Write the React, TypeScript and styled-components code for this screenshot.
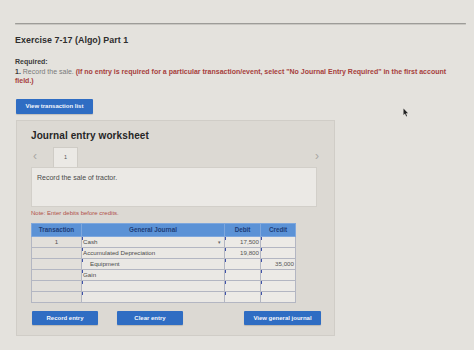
import React from 'react';
import styled, { createGlobalStyle } from 'styled-components';

const GlobalStyle = createGlobalStyle`
  html, body {
    margin: 0;
    padding: 0;
    background: #e4e2dd;
  }
  body {
    width: 474px;
    height: 350px;
    overflow: hidden;
    font-family: 'Liberation Sans', Arial, sans-serif;
    color: #2a2a2a;
  }
`;

interface Row {
  trans?: string;
  account: string;
  indent?: boolean;
  debit?: string;
  credit?: string;
  select?: boolean;
}

const rows: Row[] = [
  { trans: '1', account: 'Cash', debit: '17,500', select: true },
  { account: 'Accumulated Depreciation', debit: '19,800' },
  { account: 'Equipment', indent: true, credit: '35,000' },
  { account: 'Gain' },
  { account: '' },
  { account: '' },
];

export default function App() {
  return (
    <>
      <GlobalStyle />
      <Page>
        <TopRule />
        <Title>Exercise 7-17 (Algo) Part 1</Title>
        <Required>
          <strong>Required:</strong>
          <Instruction>
            <Lead>1. </Lead>
            <Muted>Record the sale. </Muted>
            <Warn>
              (If no entry is required for a particular transaction/event, select "No Journal Entry
              Required" in the first account
            </Warn>
            <br />
            <Warn>field.)</Warn>
          </Instruction>
        </Required>
        <BlueButton $width={77}>View transaction list</BlueButton>
        <Pointer viewBox="0 0 6 9">
          <path d="M0.5 0.5 L0.5 7 L2 5.6 L3.2 8.4 L4 8 L2.9 5.3 L5 5.2 Z" fill="#222" />
        </Pointer>
        <Panel>
          <PanelTitle>Journal entry worksheet</PanelTitle>
          <TabRow>
            <Arrow>‹</Arrow>
            <Tab>1</Tab>
            <Spacer />
            <Arrow $right>›</Arrow>
          </TabRow>
          <Task>Record the sale of tractor.</Task>
          <Note>Note: Enter debits before credits.</Note>
          <Table>
            <thead>
              <tr>
                <Th $w={49}>Transaction</Th>
                <Th $w={142}>General Journal</Th>
                <Th $w={35}>Debit</Th>
                <Th $w={34}>Credit</Th>
              </tr>
            </thead>
            <tbody>
              {rows.map((r, i) => (
                <tr key={i}>
                  <TransCell>{r.trans}</TransCell>
                  <AccountCell $indent={r.indent}>
                    <Tick />
                    {r.account}
                    {r.select && <Caret>▾</Caret>}
                  </AccountCell>
                  <AmountCell>
                    <Tick />
                    {r.debit}
                  </AmountCell>
                  <AmountCell>
                    <Tick />
                    {r.credit}
                  </AmountCell>
                </tr>
              ))}
            </tbody>
          </Table>
          <Actions>
            <BlueButton $width={66}>Record entry</BlueButton>
            <BlueButton $width={66}>Clear entry</BlueButton>
            <Spacer />
            <BlueButton $width={77}>View general journal</BlueButton>
          </Actions>
        </Panel>
      </Page>
    </>
  );
}

const Page = styled.div`
  position: relative;
  padding: 23px 8px 0 15px;
`;

const TopRule = styled.div`
  height: 1px;
  background: #9d9c98;
  border-radius: 1px;
  box-shadow: 0 1px 0 #c9c7c2;
`;

const Title = styled.h1`
  margin: 10px 0 0;
  font-size: 8.9px;
  font-weight: 700;
  line-height: 12px;
  color: #2e2e2e;
  letter-spacing: 0.05px;
`;

const Required = styled.div`
  margin-top: 11px;
  font-size: 7px;
  line-height: 9.5px;
  color: #3a3a3a;
  strong {
    display: block;
    font-size: 7px;
    font-weight: 700;
  }
`;

const Instruction = styled.p`
  margin: 0;
  white-space: nowrap;
`;

const Lead = styled.span`
  font-weight: 700;
  color: #3a3a3a;
`;

const Muted = styled.span`
  color: #7a7a7a;
`;

const Warn = styled.span`
  color: #a6403c;
  font-weight: 700;
`;

const BlueButton = styled.div<{ $width: number }>`
  display: flex;
  align-items: center;
  justify-content: center;
  width: ${(p) => p.$width}px;
  height: 15px;
  margin-top: 13px;
  margin-left: 1px;
  background: #2f6dc3;
  border-radius: 1px;
  color: #f4f6fb;
  font-size: 6px;
  font-weight: 700;
  box-shadow: 0 1px 1px rgba(0, 0, 0, 0.15);
`;

const Pointer = styled.svg`
  position: absolute;
  left: 403px;
  top: 108px;
  width: 6px;
  height: 9px;
`;

const Panel = styled.section`
  margin: 6px 0 0 1px;
  width: 319px;
  height: 216px;
  box-sizing: border-box;
  padding: 9px 18px 0 14px;
  background: #dcd9d3;
  border: 1px solid #d0cdc7;
  ${BlueButton} {
    margin: 0;
    height: 14px;
  }
`;

const PanelTitle = styled.h2`
  margin: 0;
  font-size: 10px;
  line-height: 12px;
  font-weight: 700;
  color: #262626;
  letter-spacing: 0.1px;
`;

const TabRow = styled.div`
  display: flex;
  align-items: flex-end;
  width: 290px;
  height: 20px;
  margin-top: 5px;
`;

const Arrow = styled.span<{ $right?: boolean }>`
  width: 22px;
  box-sizing: border-box;
  padding: 0 2px;
  font-size: 12px;
  line-height: 22px;
  color: #a9a7a3;
  text-align: ${(p) => (p.$right ? 'right' : 'left')};
`;

const Tab = styled.div`
  width: 25px;
  height: 20px;
  box-sizing: border-box;
  background: #ebe9e5;
  border: 1px solid #cfccc6;
  border-bottom: none;
  font-size: 5.5px;
  line-height: 18px;
  text-align: center;
  color: #555;
`;

const Spacer = styled.div`
  flex: 1;
`;

const Task = styled.div`
  width: 286px;
  height: 40px;
  box-sizing: border-box;
  padding: 6px 5px;
  background: #ebe9e5;
  border: 1px solid #d2cfc9;
  font-size: 7px;
  color: #4a4a4a;
`;

const Note = styled.div`
  margin-top: 2px;
  font-size: 6px;
  line-height: 8px;
  color: #b0504a;
`;

const Table = styled.table`
  margin-top: 6px;
  border-collapse: collapse;
  table-layout: fixed;
  width: 264px;
  font-size: 6.2px;
  td {
    height: 10px;
    padding: 0;
    border: 1px solid #b3b6c2;
  }
`;

const Th = styled.th<{ $w: number }>`
  width: ${(p) => p.$w}px;
  height: 12px;
  padding: 0;
  background: #5b92d6;
  border: 1px solid #7ea7dd;
  color: #1d3d78;
  font-weight: 700;
  font-size: 6.3px;
`;

const TransCell = styled.td`
  background: #e2dfda;
  text-align: center;
  color: #555;
`;

const Tick = styled.i`
  position: absolute;
  left: 0;
  top: 0;
  width: 1px;
  height: 3px;
  background: #3f52a8;
`;

const AccountCell = styled.td<{ $indent?: boolean }>`
  position: relative;
  background: #eae8e4;
  border-left: 1px solid #4a5ba8 !important;
  padding-left: ${(p) => (p.$indent ? 8 : 1)}px !important;
  color: #4a4a4a;
  white-space: nowrap;
`;

const Caret = styled.span`
  position: absolute;
  right: 3px;
  top: 0;
  font-size: 5px;
  line-height: 10px;
  color: #666;
`;

const AmountCell = styled.td`
  position: relative;
  background: #eceae6;
  border-left: 1px solid #4a5ba8 !important;
  text-align: right;
  padding-right: 1px !important;
  color: #555;
`;

const Actions = styled.div`
  display: flex;
  gap: 19px;
  margin-top: 8px;
  padding-left: 1px;
  width: 289px;
`;
